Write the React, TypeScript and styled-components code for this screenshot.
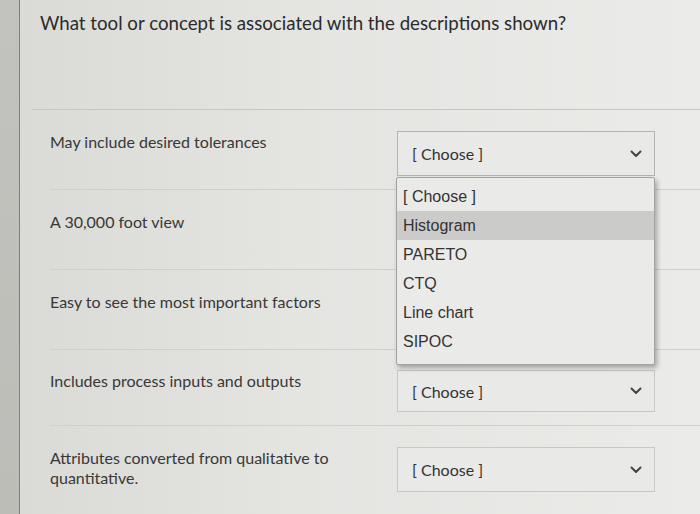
import styled, { createGlobalStyle } from "styled-components";

const GlobalStyle = createGlobalStyle`
  html, body {
    margin: 0;
    padding: 0;
    background: #c3c3bf;
  }
  * {
    box-sizing: border-box;
  }
`;

const questions = [
  { label: "May include desired tolerances", open: true },
  { label: "A 30,000 foot view", hidden: true },
  { label: "Easy to see the most important factors", hidden: true },
  { label: "Includes process inputs and outputs", compact: true },
  { label: "Attributes converted from qualitative to quantitative." },
];

const options = ["[ Choose ]", "Histogram", "PARETO", "CTQ", "Line chart", "SIPOC"];

const Chevron = () => (
  <svg width="12" height="8" viewBox="0 0 12 8">
    <polyline
      points="1.5,1.5 6,6 10.5,1.5"
      fill="none"
      stroke="#444"
      strokeWidth="2"
      strokeLinecap="round"
      strokeLinejoin="round"
    />
  </svg>
);

const App = () => {
  return (
    <>
      <GlobalStyle />
      <Page>
        <Gutter />
        <Card>
          <Header>
            <Title>What tool or concept is associated with the descriptions shown?</Title>
          </Header>
          <QuestionList>
            {questions.map((q, index) => (
              <Row key={index} compact={q.compact}>
                <Label>{q.label}</Label>
                <SelectWrap compact={q.compact}>
                  {!q.hidden && (
                    <SelectBox focused={q.open}>
                      <span>[ Choose ]</span>
                      <Chevron />
                    </SelectBox>
                  )}
                  {q.open && (
                    <OptionList>
                      {options.map((opt, i) => (
                        <OptionItem key={opt} active={i === 1}>
                          {opt}
                        </OptionItem>
                      ))}
                    </OptionList>
                  )}
                </SelectWrap>
              </Row>
            ))}
          </QuestionList>
        </Card>
      </Page>
    </>
  );
};

const Page = styled.div`
  display: flex;
  width: 700px;
  height: 514px;
  overflow: hidden;
`;

const Gutter = styled.div`
  width: 19px;
  flex-shrink: 0;
  background: linear-gradient(to bottom, #c2c2be, #bdbdb8);
`;

const Card = styled.div`
  flex: 1;
  display: flex;
  flex-direction: column;
  border-left: 1px solid #7f7f7b;
  background: linear-gradient(to right, #dadad6 0%, #e4e4e1 40%, #ebebe9 100%);
  font-family: Lato, "Liberation Sans", sans-serif;
  color: #333;
`;

const Header = styled.div`
  height: 110px;
  margin-left: 12px;
  padding: 11px 0 0 8px;
  border-bottom: 1px solid #c6c6c2;
`;

const Title = styled.h1`
  margin: 0;
  font-size: 18.7px;
  font-weight: 400;
  line-height: 24px;
  color: #2b2b2b;
`;

const QuestionList = styled.div`
  display: flex;
  flex-direction: column;
  padding-left: 30px;
`;

const Row = styled.div<{ compact?: boolean }>`
  display: flex;
  align-items: flex-start;
  min-height: ${(p) => (p.compact ? "76px" : "80px")};
  padding-top: ${(p) => (p.compact ? "20px" : "21px")};
  padding-bottom: 13px;
  border-bottom: 1px solid #cfcfcb;

  &:last-child {
    border-bottom: none;
  }
`;

const Label = styled.div`
  width: 347px;
  flex-shrink: 0;
  padding-top: 1px;
  padding-right: 40px;
  font-size: 16px;
  line-height: 20px;
  color: #383838;
`;

const SelectWrap = styled.div<{ compact?: boolean }>`
  position: relative;
  width: 258px;
  height: ${(p) => (p.compact ? "42px" : "45px")};
`;

const SelectBox = styled.div<{ focused?: boolean }>`
  display: flex;
  align-items: center;
  justify-content: space-between;
  height: 100%;
  padding: 0 12px 0 14px;
  border: 1px solid ${(p) => (p.focused ? "#b3b3b0" : "#c8c8c4")};
  background: #e9e9e7;
  font-size: 16px;
  color: #333;
`;

const OptionList = styled.div`
  position: absolute;
  top: 46px;
  left: -1px;
  width: 259px;
  padding: 4px 0 8px;
  background: #eaeae8;
  border: 1px solid #a3a3a0;
  border-radius: 2px;
  box-shadow: 2px 3px 5px rgba(0, 0, 0, 0.3);
  font-family: "Liberation Sans", Arial, sans-serif;
  z-index: 5;
`;

const OptionItem = styled.div<{ active?: boolean }>`
  height: 29px;
  display: flex;
  align-items: center;
  padding-left: 6px;
  font-size: 16px;
  color: #333;
  background: ${(p) => (p.active ? "#cbcbc9" : "transparent")};
`;

export default App;
